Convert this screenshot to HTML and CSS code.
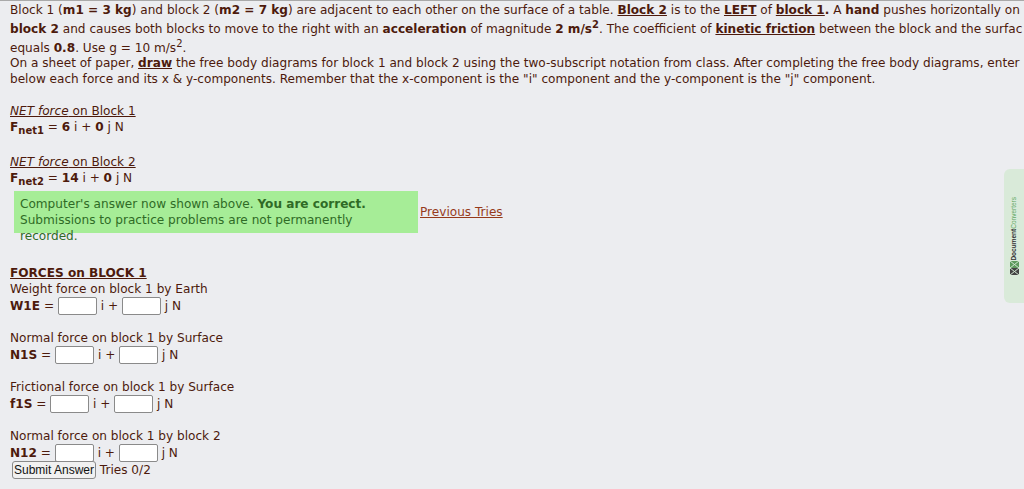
FILE: index.html
```html
<!DOCTYPE html>
<html lang="en">
<head>
<meta charset="utf-8">
<title>Forces on blocks</title>
<link rel="stylesheet" href="styles.css">
</head>
<body>
<main class="page">
  <p class="line tall">Block 1 (<b>m1 = 3 kg</b>) and block 2 (<b>m2 = 7 kg</b>) are adjacent to each other on the surface of a table. <b><u>Block 2</u></b> is to the <b><u>LEFT</u></b> of <b><u>block 1</u>.</b> A <b>hand</b> pushes horizontally on</p>
  <p class="line tall"><b>block 2</b> and causes both blocks to move to the right with an <b>acceleration</b> of magnitude <b>2 m/s<sup>2</sup></b>. The coefficient of <b><u>kinetic friction</u></b> between the block and the surfac</p>
  <p class="line mid">equals <b>0.8</b>. Use g = 10 m/s<sup>2</sup>.</p>
  <p class="line">On a sheet of paper, <b><u>draw</u></b> the free body diagrams for block 1 and block 2 using the two-subscript notation from class. After completing the free body diagrams, enter</p>
  <p class="line">below each force and its x &amp; y-components. Remember that the x-component is the "i" component and the y-component is the "j" component.</p>

  <p class="line net-head"><u><i>NET force</i> on Block 1</u></p>
  <p class="line"><b>F<sub>net1</sub></b> = <b>6</b> i + <b>0</b> j N</p>
  <p class="line net-head second"><u><i>NET force</i> on Block 2</u></p>
  <p class="line"><b>F<sub>net2</sub></b> = <b>14</b> i + <b>0</b> j N</p>

  <div class="result">
    <div class="notice">Computer's answer now shown above. <b>You are correct.</b><br>Submissions to practice problems are not permanently recorded.</div>
    <a class="tries-link" href="#">Previous Tries</a>
  </div>

  <p class="line section"><b><u>FORCES on BLOCK 1</u></b></p>
  <p class="line">Weight force on block 1 by Earth</p>
  <div class="line field"><b>W1E</b> = <input class="box" type="text"> i + <input class="box" type="text"> j N</div>

  <p class="line force">Normal force on block 1 by Surface</p>
  <div class="line field"><b>N1S</b> = <input class="box" type="text"> i + <input class="box" type="text"> j N</div>

  <p class="line force">Frictional force on block 1 by Surface</p>
  <div class="line field"><b>f1S</b> = <input class="box" type="text"> i + <input class="box" type="text"> j N</div>

  <p class="line force">Normal force on block 1 by block 2</p>
  <div class="line field"><b>N12</b> = <input class="box" type="text"> i + <input class="box" type="text"> j N</div>

  <div class="line submit-row"><button class="submit" type="button">Submit Answer</button> Tries 0/2</div>
</main>
<aside class="tab">
  <svg class="tab-logo" width="9" height="14" viewBox="0 0 9 14" aria-hidden="true">
    <rect width="9" height="7" fill="#5d9a5d"/>
    <rect y="7" width="9" height="7" fill="#444"/>
    <path d="M0 0l9 7M9 0L0 7M0 7l9 7M9 7l-9 7" stroke="#cfe3cf" stroke-width="1" fill="none"/>
  </svg>
  <span class="tab-text"><b>Document</b><span class="tab-green">Converters</span></span>
</aside>
</body>
</html>
```
FILE: styles.css
```css
html, body {
  margin: 0;
  padding: 0;
  height: 489px;
  overflow: hidden;
}
body {
  background: #ecedf0;
  color: #4d1a0c;
  font-family: "DejaVu Sans", Verdana, sans-serif;
  font-size: 12.1px;
  line-height: 16px;
  border-top: 1px solid #a9a9a9;
  box-sizing: border-box;
}
.page {
  padding: 1px 0 0 10px;
}
.line {
  margin: 0;
  white-space: nowrap;
  height: 16px;
}
.tall { height: 19px; }
.mid { height: 15px; }
sup, sub {
  font-size: 10px;
  line-height: 0;
}
.net-head { margin-top: 16px; }
.net-head.second { margin-top: 19px; }
.result {
  display: flex;
  align-items: center;
  margin: 5px 0 0 4px;
}
.notice {
  background: #a6ed97;
  color: #2f6b26;
  padding: 5px 6px;
  height: 32px;
  width: 392px;
}
.tries-link {
  color: #963a1b;
  margin: 0 0 0 2px;
}
.section { margin-top: 32px; }
.force { margin-top: 17px; }
.field { display: block; }
.box {
  box-sizing: border-box;
  width: 39px;
  height: 18px;
  padding: 0;
  margin: 0;
  border: 1px solid #8a8a8a;
  border-radius: 2px;
  background: #fff;
  vertical-align: middle;
}
.submit-row { margin-top: 1px; height: 18px; }
.submit {
  box-sizing: border-box;
  height: 18px;
  width: 84px;
  margin: 0 0 0 2px;
  padding: 0;
  background: #f1f1f1;
  border: 1px solid #8a8a8a;
  border-radius: 3px;
  color: #111;
  font-family: "Liberation Sans", Arial, sans-serif;
  font-size: 12px;
  vertical-align: middle;
}
.tab {
  position: absolute;
  right: 0;
  top: 169px;
  width: 20px;
  height: 134px;
  background: #d9ead9;
  border-radius: 6px 0 0 6px;
  display: flex;
  flex-direction: column-reverse;
  align-items: center;
  justify-content: center;
  gap: 1px;
}
.tab-text {
  writing-mode: vertical-rl;
  transform: rotate(180deg);
  font-family: "Liberation Sans", Arial, sans-serif;
  font-size: 6.5px;
  line-height: 8px;
  color: #333;
}
.tab-green { color: #63a863; }
```
